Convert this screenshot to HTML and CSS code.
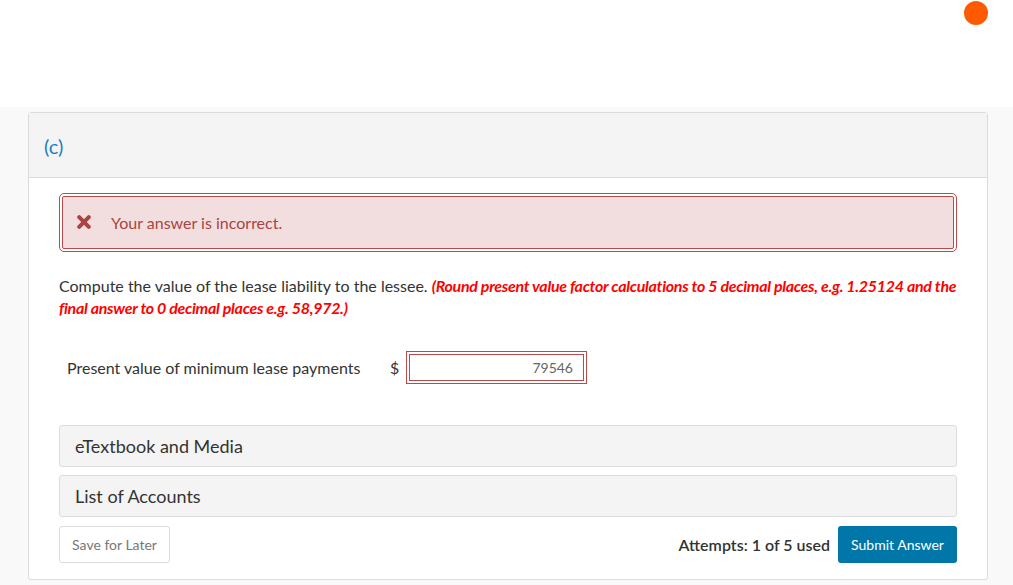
FILE: index.html
```html
<!DOCTYPE html>
<html>
<head>
<meta charset="utf-8">
<link rel="stylesheet" href="styles.css">
</head>
<body>
<div class="topbar"><span class="dot"></span></div>
<div class="page">
  <div class="card">
    <div class="card-head">(c)</div>
    <div class="card-body">
      <div class="alert">
        <svg class="x-icon" width="14" height="14" viewBox="0 0 14 14"><path d="M2.2 2.2 L11.8 11.8 M11.8 2.2 L2.2 11.8" stroke="#a94442" stroke-width="4" stroke-linecap="round"/></svg>
        <span>Your answer is incorrect.</span>
      </div>
      <p class="prompt">Compute the value of the lease liability to the lessee. <em class="hint">(Round present value factor calculations to 5 decimal places, e.g. 1.25124 and the final answer to 0 decimal places e.g. 58,972.)</em></p>
      <div class="answer-row">
        <span class="label">Present value of minimum lease payments</span>
        <span class="cur">$</span>
        <div class="input">79546</div>
      </div>
      <div class="acc">eTextbook and Media</div>
      <div class="acc">List of Accounts</div>
      <div class="actions">
        <button class="btn-save">Save for Later</button>
        <div class="right">
          <span class="attempts">Attempts: 1 of 5 used</span>
          <button class="btn-submit">Submit Answer</button>
        </div>
      </div>
    </div>
  </div>
</div>
</body>
</html>
```
FILE: styles.css
```css
html, body { margin: 0; padding: 0; }
body {
  font-family: Lato, "Open Sans", sans-serif;
  color: #333;
  background: #f9f9f9;
  width: 1013px;
  height: 585px;
  overflow: hidden;
}
.topbar {
  height: 107px;
  background: #fff;
  position: relative;
}
.dot {
  position: absolute;
  top: 1px;
  left: 964px;
  width: 24px;
  height: 24px;
  border-radius: 50%;
  background: #ff5a00;
}
.page {
  padding: 5px 25px 0 28px;
}
.card {
  width: 958px;
  background: #fff;
  border: 1px solid #dcdcdc;
  border-radius: 3px;
}
.card-head {
  height: 64px;
  background: #f4f4f4;
  border-bottom: 1px solid #dcdcdc;
  padding-left: 15px;
  font-size: 20px;
  line-height: 66px;
  color: #1a7fbf;
}
.card-body {
  padding: 15px 30px 16px 30px;
}
.alert {
  height: 51px;
  margin: 3px 3px 0 3px;
  background: #f2dede;
  border: 1px solid #b94a48;
  outline: 1px solid #b94a48;
  outline-offset: 2px;
  border-radius: 2px;
  display: flex;
  align-items: center;
  padding-left: 14px;
  color: #a94442;
  font-size: 16px;
}
.x-icon { margin-right: 20px; margin-top: -2px; }
.prompt {
  margin: 26px 0 0 0;
  font-size: 16px;
  line-height: 22px;
  color: #333;
}
.hint {
  color: #f00;
  font-weight: bold;
  letter-spacing: -0.3px;
}
.answer-row {
  display: flex;
  align-items: center;
  margin-top: 32px;
  padding-left: 8px;
}
.label { font-size: 16px; width: 323px; }
.cur { font-size: 16px; width: 16px; }
.input {
  width: 163px;
  height: 25px;
  border: 1px solid #b94a48;
  outline: 1px solid #b94a48;
  outline-offset: 2px;
  margin: 3px;
  text-align: right;
  padding-right: 10px;
  font-size: 14px;
  line-height: 25px;
  color: #666;
}
.acc {
  height: 40px;
  background: #f4f4f4;
  border: 1px solid #dcdcdc;
  border-radius: 3px;
  padding-left: 15px;
  font-size: 18px;
  line-height: 40px;
  color: #333;
  margin-top: 8px;
}
.answer-row + .acc { margin-top: 41px; }
.actions {
  display: flex;
  justify-content: space-between;
  align-items: center;
  margin-top: 9px;
}
.btn-save {
  height: 37px;
  width: 111px;
  background: #fff;
  border: 1px solid #dcdcdc;
  border-radius: 3px;
  font-family: Lato, sans-serif;
  font-size: 14px;
  color: #777;
}
.right { display: flex; align-items: center; gap: 8px; }
.attempts { font-size: 16px; font-weight: 600; color: #333; }
.btn-submit {
  height: 37px;
  width: 119px;
  background: #0077a8;
  border: none;
  border-radius: 3px;
  font-family: Lato, sans-serif;
  font-size: 14px;
  color: #fff;
}
```
